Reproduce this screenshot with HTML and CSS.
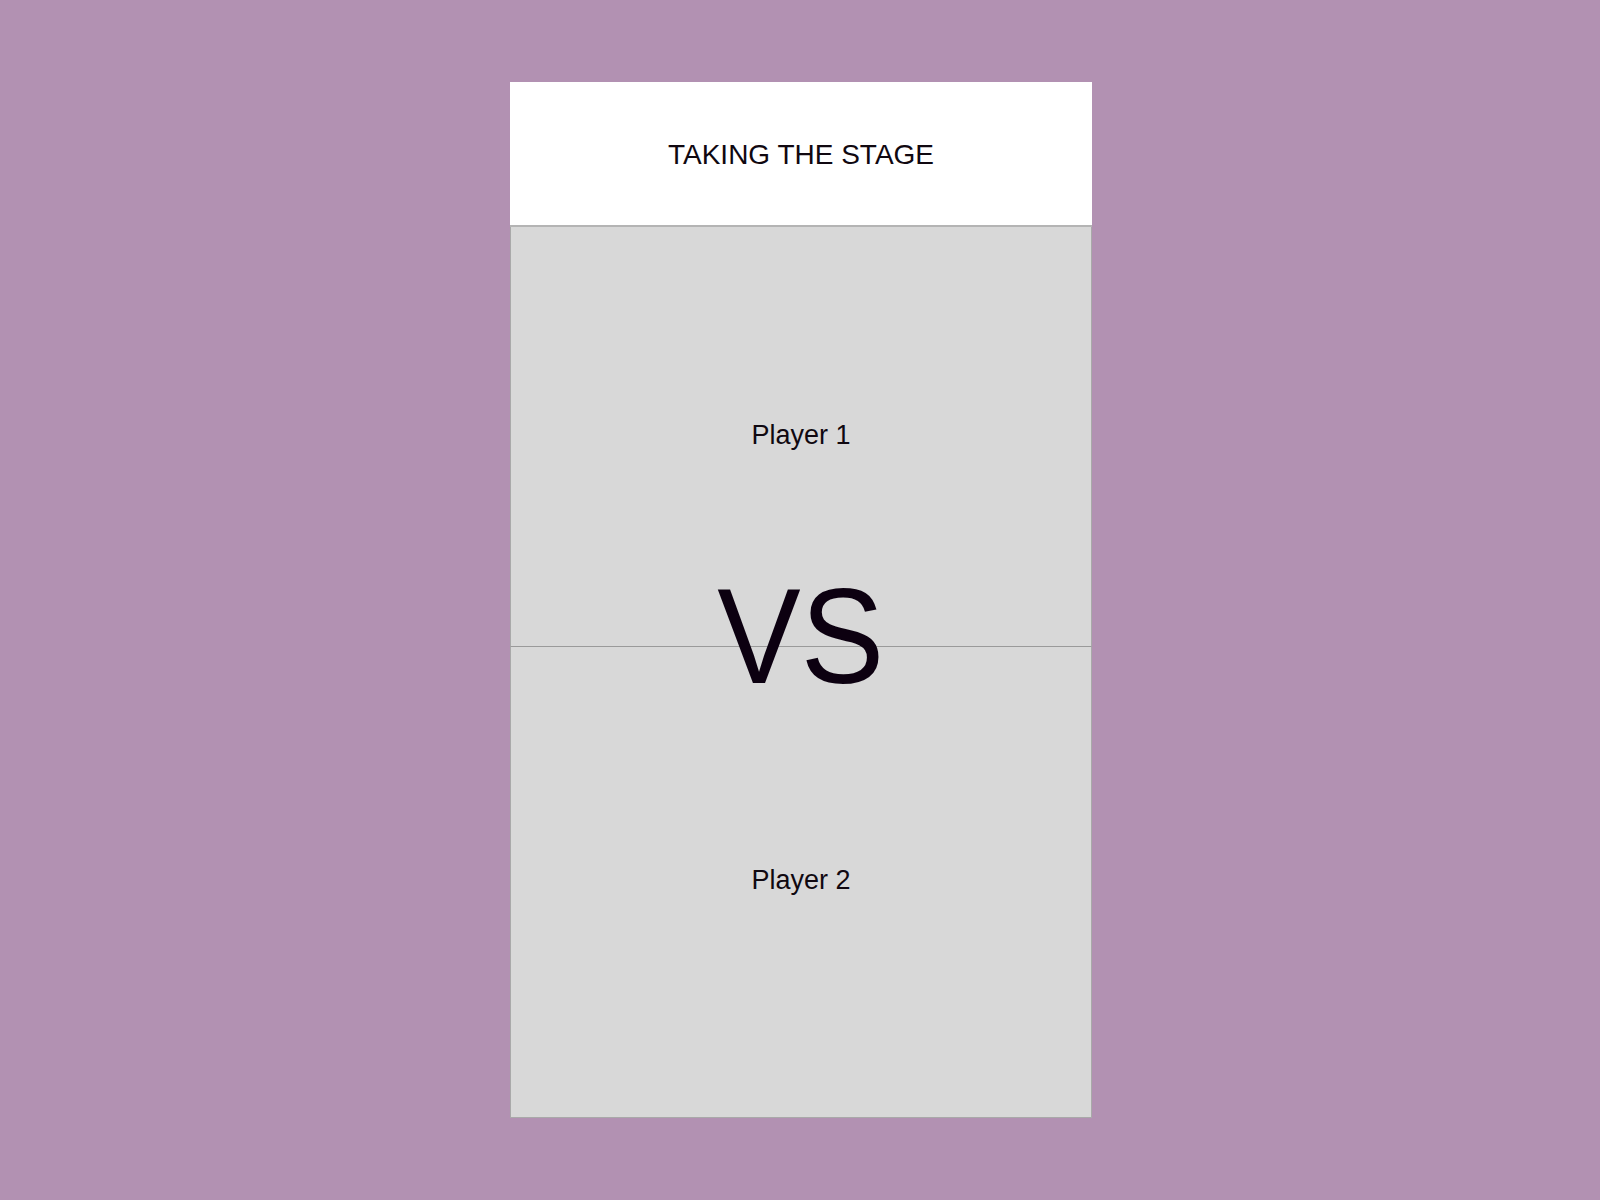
FILE: index.html
```html
<!DOCTYPE html>
<html lang="en">

<head>
  <meta charset="UTF-8">
  <meta name="viewport" content="width=device-width, initial-scale=1.0">
  <title>Taking the Stage</title>
  <link rel="stylesheet" href="styles.css">
</head>

<body>
  <div class="stage">
    <header class="stage-header">
      <h1>TAKING THE STAGE</h1>
    </header>
    <div class="stage-body">
      <section class="player player-1">
        <span>Player 1</span>
      </section>
      <section class="player player-2">
        <span>Player 2</span>
      </section>
      <div class="versus"><span>VS</span></div>
    </div>
  </div>
</body>

</html>
```

FILE: styles.css
```css
body {
  margin: 0;
  background-color: #b291b2;
  font-family: 'Liberation Sans', Arial, sans-serif;
  color: #100810;
}

.stage {
  width: 582px;
  margin: 82px 0 0 calc(50% - 290px);
}

.stage-header {
  height: 145px;
  box-sizing: border-box;
  padding-top: 2px;
  display: flex;
  align-items: center;
  justify-content: center;
  background-color: #ffffff;
  border-bottom: 2px solid #b4b4b4;
}

.stage-header h1 {
  margin: 0;
  font-size: 28px;
  font-weight: normal;
}

.stage-body {
  position: relative;
}

.player {
  display: flex;
  align-items: center;
  justify-content: center;
  box-sizing: border-box;
  background-color: #d8d8d8;
  border-left: 1px solid #a9a9a9;
  border-right: 1px solid #a9a9a9;
  font-size: 27px;
}

.player-1 {
  height: 420px;
  padding-bottom: 2px;
  border-bottom: 1px solid #9a9a9a;
}

.player-2 {
  height: 471px;
  padding-bottom: 4px;
  border-bottom: 1px solid #a9a9a9;
}

.versus {
  position: absolute;
  left: 0;
  right: 0;
  top: 341px;
  text-align: center;
  font-size: 136px;
  line-height: 136px;
  color: #0c0010;
}

.versus span {
  display: inline-block;
  transform: scaleX(0.92);
}
```
